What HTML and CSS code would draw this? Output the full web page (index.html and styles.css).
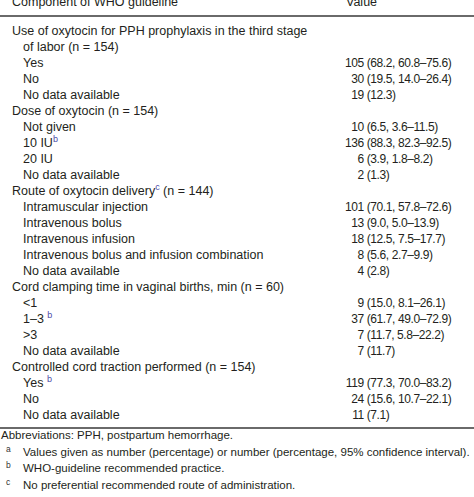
FILE: index.html
```html
<!DOCTYPE html>
<html>
<head>
<meta charset="utf-8">
<link rel="stylesheet" href="styles.css">
</head>
<body>
<div class="page">
  <table class="tbl">
    <colgroup><col class="c1"><col class="c2"></colgroup>
    <thead>
      <tr><th class="hl">Component of WHO guideline</th><th class="hv">Value</th></tr>
    </thead>
    <tbody>
      <tr class="first"><td class="grp">Use of oxytocin for PPH prophylaxis in the third stage</td><td></td></tr>
      <tr><td class="sub">of labor (n = 154)</td><td></td></tr>
      <tr><td class="sub">Yes</td><td class="val"><span class="n">105</span> (68.2, 60.8–75.6)</td></tr>
      <tr><td class="sub">No</td><td class="val"><span class="n">30</span> (19.5, 14.0–26.4)</td></tr>
      <tr><td class="sub">No data available</td><td class="val"><span class="n">19</span> (12.3)</td></tr>
      <tr><td class="grp">Dose of oxytocin (n = 154)</td><td></td></tr>
      <tr><td class="sub">Not given</td><td class="val"><span class="n">10</span> (6.5, 3.6–11.5)</td></tr>
      <tr><td class="sub">10 IU<sup class="ref">b</sup></td><td class="val"><span class="n">136</span> (88.3, 82.3–92.5)</td></tr>
      <tr><td class="sub">20 IU</td><td class="val"><span class="n">6</span> (3.9, 1.8–8.2)</td></tr>
      <tr><td class="sub">No data available</td><td class="val"><span class="n">2</span> (1.3)</td></tr>
      <tr><td class="grp">Route of oxytocin delivery<sup class="ref">c</sup> (n = 144)</td><td></td></tr>
      <tr><td class="sub">Intramuscular injection</td><td class="val"><span class="n">101</span> (70.1, 57.8–72.6)</td></tr>
      <tr><td class="sub">Intravenous bolus</td><td class="val"><span class="n">13</span> (9.0, 5.0–13.9)</td></tr>
      <tr><td class="sub">Intravenous infusion</td><td class="val"><span class="n">18</span> (12.5, 7.5–17.7)</td></tr>
      <tr><td class="sub">Intravenous bolus and infusion combination</td><td class="val"><span class="n">8</span> (5.6, 2.7–9.9)</td></tr>
      <tr><td class="sub">No data available</td><td class="val"><span class="n">4</span> (2.8)</td></tr>
      <tr><td class="grp">Cord clamping time in vaginal births, min (n = 60)</td><td></td></tr>
      <tr><td class="sub">&lt;1</td><td class="val"><span class="n">9</span> (15.0, 8.1–26.1)</td></tr>
      <tr><td class="sub">1–3 <sup class="ref">b</sup></td><td class="val"><span class="n">37</span> (61.7, 49.0–72.9)</td></tr>
      <tr><td class="sub">&gt;3</td><td class="val"><span class="n">7</span> (11.7, 5.8–22.2)</td></tr>
      <tr><td class="sub">No data available</td><td class="val"><span class="n">7</span> (11.7)</td></tr>
      <tr><td class="grp">Controlled cord traction performed (n = 154)</td><td></td></tr>
      <tr><td class="sub">Yes <sup class="ref">b</sup></td><td class="val"><span class="n">119</span> (77.3, 70.0–83.2)</td></tr>
      <tr><td class="sub">No</td><td class="val"><span class="n">24</span> (15.6, 10.7–22.1)</td></tr>
      <tr class="last"><td class="sub">No data available</td><td class="val"><span class="n">11</span> (7.1)</td></tr>
    </tbody>
  </table>
  <div class="notes">
    <p class="abbr">Abbreviations: PPH, postpartum hemorrhage.</p>
    <p class="fn"><sup class="fl">a</sup>Values given as number (percentage) or number (percentage, 95% confidence interval).</p>
    <p class="fn"><sup class="fl">b</sup>WHO-guideline recommended practice.</p>
    <p class="fn"><sup class="fl">c</sup>No preferential recommended route of administration.</p>
  </div>
</div>
</body>
</html>
```
FILE: styles.css
```css
html, body {
  margin: 0;
  padding: 0;
  background: #ffffff;
}
body {
  font-family: "Liberation Sans", Arial, sans-serif;
  font-size: 12.5px;
  color: #231f20;
  overflow: hidden;
}
.page {
  width: 474px;
  margin-top: -6px;
}
.tbl {
  width: 474px;
  border-collapse: collapse;
  table-layout: fixed;
}
.c1 { width: 340px; }
.c2 { width: 134px; }
.tbl th, .tbl td {
  padding: 0;
  line-height: 16px;
  height: 16px;
  white-space: nowrap;
  font-weight: normal;
  text-align: left;
  vertical-align: top;
}
.tbl thead th {
  border-bottom: 2px solid #6a6a6a;
  padding-bottom: 5px;
}
.tbl th.hl { padding-left: 12px; }
.tbl th.hv { padding-left: 6px; }
.tbl tr.first td { padding-top: 6px; }
.tbl tr.last td { padding-bottom: 4px; }
.tbl tbody tr.last { border-bottom: 2px solid #6a6a6a; }
.tbl td.grp { padding-left: 12px; }
.tbl td.sub { padding-left: 23px; }
.tbl td.val {
  font-size: 12px;
  letter-spacing: -0.4px;
}
.n {
  display: inline-block;
  width: 23.8px;
  text-align: right;
}
.ref {
  color: #4b4ba6;
  font-size: 9px;
  line-height: 0;
  vertical-align: 5px;
  letter-spacing: 0;
}
.notes {
  font-size: 11.5px;
}
.notes p {
  margin: 0;
  white-space: nowrap;
}
.notes p.abbr {
  padding-left: 1px;
  line-height: 12px;
  margin-bottom: 3px;
}
.fn {
  padding-left: 6px;
  line-height: 16.3px;
}
.fl {
  display: inline-block;
  width: 17px;
  font-size: 8.5px;
  line-height: 0;
  vertical-align: 4px;
  color: #333333;
}
```
